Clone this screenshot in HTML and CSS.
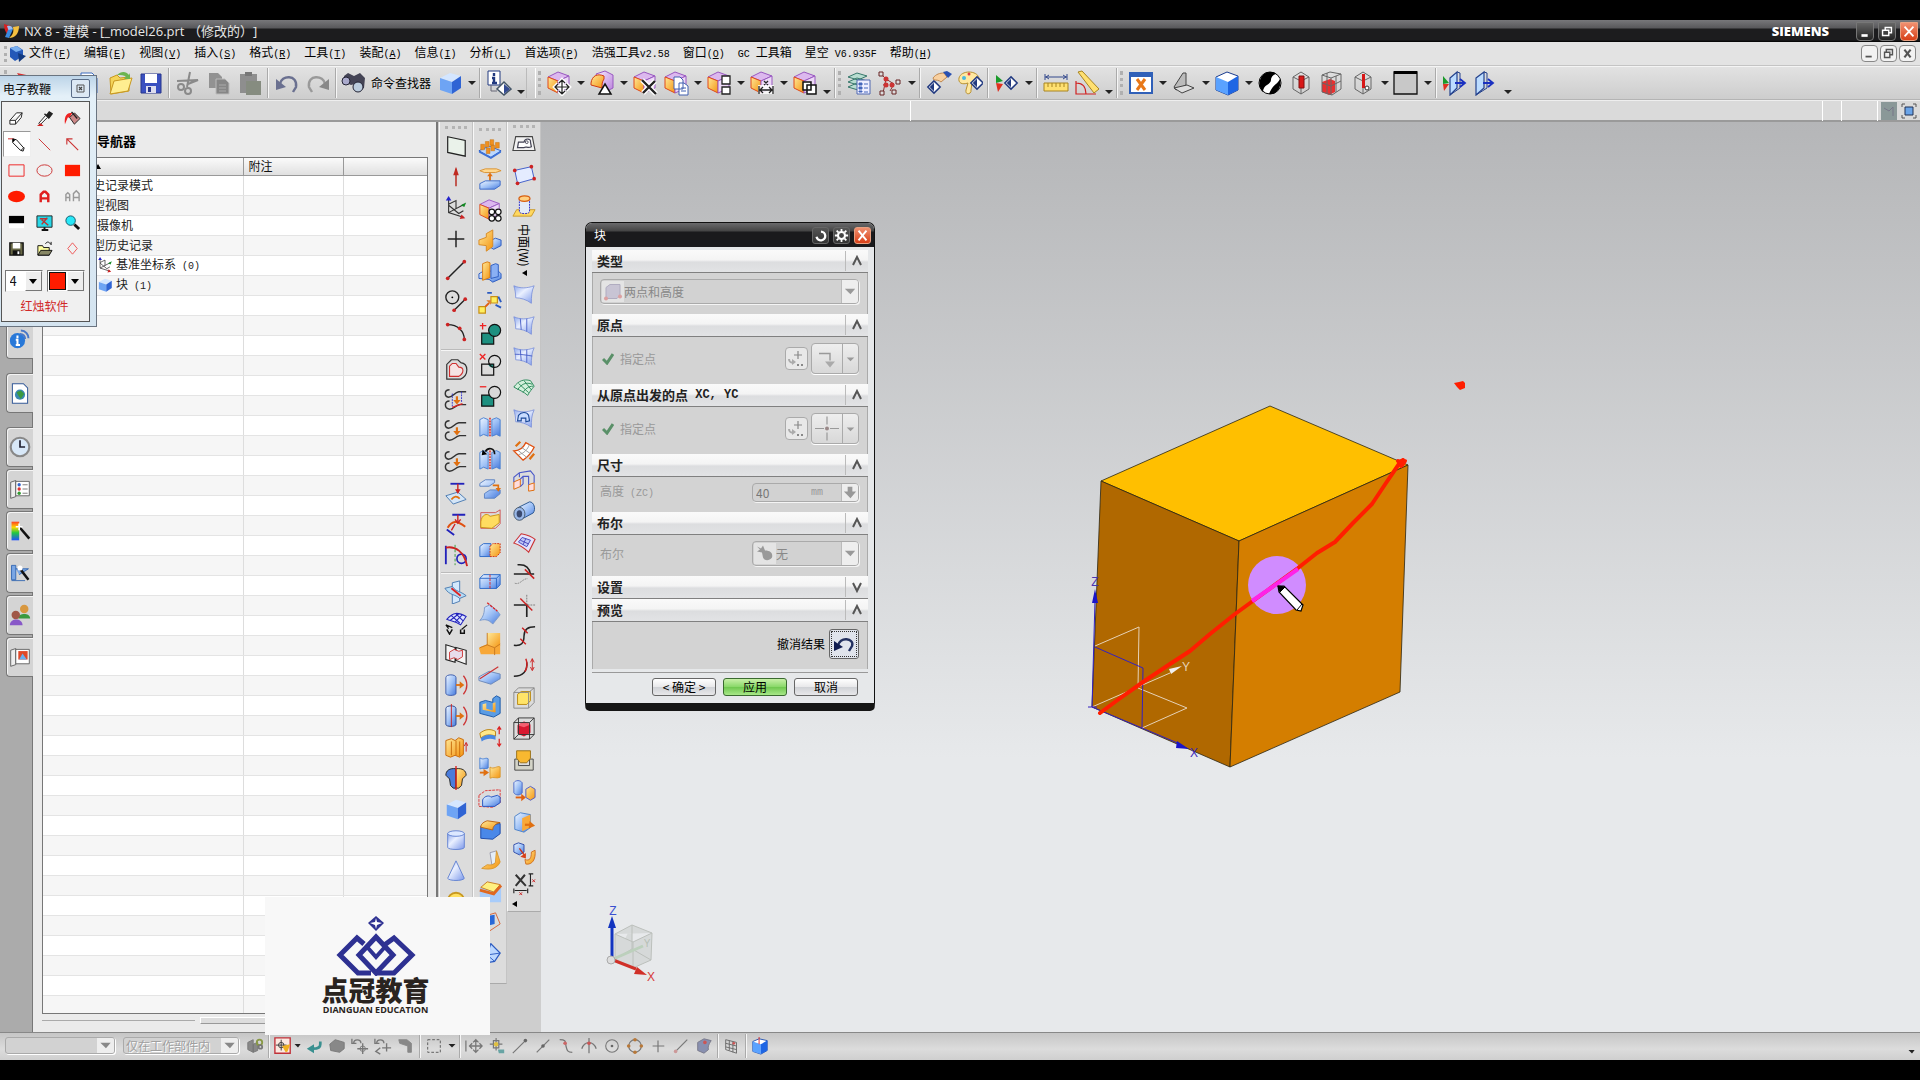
FILE: index.html
```html
<!DOCTYPE html>
<html lang="zh-CN">
<head>
<meta charset="utf-8">
<title>NX 8 - 建模</title>
<link rel="stylesheet" href="styles.css">
</head>
<body>
<svg class="defs" width="0" height="0" aria-hidden="true">
<defs>
<linearGradient id="gb" x1="0" y1="0" x2="1" y2="1"><stop offset="0" stop-color="#eef5ff"/><stop offset=".5" stop-color="#a0c2f6"/><stop offset="1" stop-color="#4679dc"/></linearGradient>
<linearGradient id="go" x1="0" y1="0" x2="1" y2="1"><stop offset="0" stop-color="#ffe898"/><stop offset="1" stop-color="#f49410"/></linearGradient>
<linearGradient id="gp" x1="0" y1="0" x2="1" y2="1"><stop offset="0" stop-color="#f8ecfe"/><stop offset="1" stop-color="#b880dc"/></linearGradient>
<linearGradient id="gs" x1="0" y1="0" x2="1" y2="1"><stop offset="0" stop-color="#8ea8ec"/><stop offset=".4" stop-color="#eaf0ff"/><stop offset="1" stop-color="#7c98ea"/></linearGradient>
<linearGradient id="gr" x1="0" y1="0" x2="0" y2="1"><stop offset="0" stop-color="#ff4020"/><stop offset=".3" stop-color="#ffd800"/><stop offset=".6" stop-color="#20c840"/><stop offset="1" stop-color="#2050ff"/></linearGradient>
<symbol id="cube" viewBox="0 0 26 26"><path d="M3 8l10-5 11 3-9 6z" fill="#d4e6ff"/><path d="M3 8l12 4v12L3 20z" fill="#6ea4f4"/><path d="M15 12l9-6v12l-9 6z" fill="#2f64d4"/></symbol>
<symbol id="ocube" viewBox="0 0 26 26"><path d="M2 7l10-5 11 4-11 5z" fill="#dcb8ee" stroke="#9858c0"/><path d="M2 7l10 4v12L2 18z" fill="url(#go)" stroke="#e04818"/><path d="M12 11l11-5v12l-11 5z" fill="#ecd8f6" stroke="#9858c0"/></symbol>
<symbol id="wire" viewBox="0 0 26 26"><path d="M5 7l8-5 8 5v12l-8 5-8-5zM5 7l8 4 8-4M13 11v13" fill="none" stroke="#666"/></symbol>
<symbol id="dia" viewBox="0 0 26 26"><path d="M13 3l10 10-10 10L3 13z" fill="#fff" stroke="#223a80" stroke-width="2.5"/><path d="M13 6v14l-7-7z" fill="#223a80"/></symbol>
<symbol id="scurve" viewBox="0 0 26 26"><path d="M6 2C0 2 0 9 5 10c5 0 6-5 11-6h8M6 14c-6 0-6 8 0 9 5 0 6-4 11-5h7" fill="none" stroke="#333" stroke-width="1.6"/><path d="M14 9v5" stroke="#e07010" stroke-width="2.4"/><path d="M10 13h8l-4 5z" fill="#e07010"/></symbol>
<symbol id="csys" viewBox="0 0 26 26"><path d="M5 2v16l16 5M5 18L22 9M5 9l8-4v9M5 10l11 9 5-3" fill="none" stroke="#333" stroke-width="1.2"/><path d="M2 5l3-5 3 5z" fill="#22c"/><path d="M18 10l6-3-2 5z" fill="#182"/><path d="M17 25l6-1-4-4z" fill="#c22"/></symbol>
<symbol id="sheet" viewBox="0 0 26 26"><path d="M2 3c7 3 14 3 22 0-3 6-3 12-3 19C16 18 9 16 4 16 4 10 3 7 2 3z" fill="url(#gs)" stroke="#7088d8" stroke-width=".8"/></symbol>
</defs>
</svg>

<div class="app">
<header class="titlebar">
  <svg class="i16" viewBox="0 0 16 16"><path d="M1 1l7 2-3 9C2 9 1 5 1 1z" fill="#d82020"/><path d="M4 3c3-1 5 0 6 3l-4 3z" fill="#9be"/><path d="M10 4l6-1c0 8-4 12-10 12 4-3 5-6 4-11z" fill="#f4c040"/><path d="M5 7l5-1-4 9-4-1z" fill="#3c8ce0"/></svg>
  <span class="apptitle">NX 8 - 建模 - [_model26.prt （修改的）]</span>
  <span class="brand">SIEMENS</span>
  <div class="winbtns">
    <button aria-label="最小化"><svg viewBox="0 0 18 19"><path d="M5 14h7" stroke="#fff" stroke-width="3"/></svg></button>
    <button aria-label="还原"><svg viewBox="0 0 18 19"><path d="M7 8V5h7v6h-3M4 8h7v6H4z" fill="none" stroke="#fff" stroke-width="1.6"/></svg></button>
    <button class="close" aria-label="关闭"><svg viewBox="0 0 18 19"><path d="M4 4l10 11M14 4L4 15" stroke="#fff" stroke-width="2"/></svg></button>
  </div>
</header>

<nav class="menubar">
  <i class="grip"></i>
  <svg class="i18" viewBox="0 0 18 18"><path d="M2 3l7-2 6 4v6l-8 5-5-4z" fill="#2458b8"/><path d="M2 3l7-2 5 4-6 2z" fill="#7ab0f0"/><path d="M10 8l8 3-7 6z" fill="#123a80"/></svg>
  <a href="#">文件<span class="la">(<u>F</u>)</span></a>
  <a href="#">编辑<span class="la">(<u>E</u>)</span></a>
  <a href="#">视图<span class="la">(<u>V</u>)</span></a>
  <a href="#">插入<span class="la">(<u>S</u>)</span></a>
  <a href="#">格式<span class="la">(<u>R</u>)</span></a>
  <a href="#">工具<span class="la">(<u>T</u>)</span></a>
  <a href="#">装配<span class="la">(<u>A</u>)</span></a>
  <a href="#">信息<span class="la">(<u>I</u>)</span></a>
  <a href="#">分析<span class="la">(<u>L</u>)</span></a>
  <a href="#">首选项<span class="la">(<u>P</u>)</span></a>
  <a href="#">浩强工具<span class="la">v2.58</span></a>
  <a href="#">窗口<span class="la">(<u>O</u>)</span></a>
  <a href="#"><span class="la">GC </span>工具箱</a>
  <a href="#">星空<span class="la"> V6.935F</span></a>
  <a href="#">帮助<span class="la">(<u>H</u>)</span></a>
  <div class="docbtns">
    <button aria-label="最小化"><svg viewBox="0 0 17 17"><path d="M4 12h7" stroke="#555" stroke-width="2"/></svg></button>
    <button aria-label="还原"><svg viewBox="0 0 17 17"><path d="M6 7V4h7v6h-3M4 7h6v6H4z" fill="none" stroke="#555" stroke-width="1.6"/></svg></button>
    <button aria-label="关闭"><svg viewBox="0 0 17 17"><path d="M5 4l7 9M12 4l-7 9" stroke="#555" stroke-width="2.4"/></svg></button>
  </div>
</nav>

<div class="toolbar">
  <div class="startgroup"><i class="grip"></i><svg viewBox="0 0 26 26"><path d="M4 3l14 3-6 10z" fill="#d83030"/></svg></div>
  <button><svg viewBox="0 0 26 26"><path d="M5 3h11l5 5v15H5z" fill="#fff" stroke="#3c6cc0"/></svg></button>
  <button><svg viewBox="0 0 26 26"><path d="M3 8l7-3 3 3 9-1v14L4 24z" fill="#f4d458" stroke="#c89820"/><path d="M3 24l4-13 18-3-4 13z" fill="#ffee90" stroke="#c89820"/><path d="M10 5c4-4 9-4 12 0l1-2v6h-6l2-2c-2-2-5-2-9-2z" fill="#6cb450"/></svg></button>
  <button><svg viewBox="0 0 26 26"><path d="M3 4h20v19H3z" fill="#3a50c0" stroke="#26348c"/><path d="M7 4h12v9H7z" fill="#fff"/><path d="M8 16h10v7H8z" fill="#dde"/><path d="M10 17h3v5h-3z" fill="#26348c"/></svg></button>
  <i class="sep"></i>
  <button><svg viewBox="0 0 26 26"><path d="M15 2l-3 15M2 11l21-1-10 4" fill="none" stroke="#8a8a8a" stroke-width="2"/><circle cx="6" cy="17" r="3" fill="none" stroke="#8a8a8a" stroke-width="2"/><circle cx="13" cy="21" r="3" fill="none" stroke="#8a8a8a" stroke-width="2"/></svg></button>
  <button><svg viewBox="0 0 26 26"><path d="M3 3h9l4 4v11H3z" fill="#929292"/><path d="M10 9h9l4 4v11H10z" fill="#868686" stroke="#bbb"/><path d="M13 15h7M13 18h7M13 21h7" stroke="#aaa"/></svg></button>
  <button><svg viewBox="0 0 26 26"><path d="M3 4h17v19H3z" fill="#8e8e8e"/><path d="M8 2h7v4H8z" fill="#777"/><path d="M9 11h15v14H9z" fill="#868c80"/></svg></button>
  <i class="sep"></i>
  <button><svg viewBox="0 0 26 26"><path d="M6 14c1-9 18-10 16 3l-3 5" fill="none" stroke="#6a7090" stroke-width="2.4"/><path d="M2 9v11l10-3z" fill="#6a7090"/></svg></button>
  <button><svg viewBox="0 0 26 26"><path d="M20 14C19 5 2 4 4 17l3 5" fill="none" stroke="#999" stroke-width="2.4"/><path d="M24 9v11l-10-3z" fill="#888"/></svg></button>
  <i class="sep"></i>
  <button class="wide"><svg viewBox="0 0 26 26"><path d="M3 6l4-3 6 3 6-3 5 5-1 10-6 3-3-7-4 1-7-3z" fill="#445"/><circle cx="5" cy="11" r="4" fill="#aac" stroke="#223"/><circle cx="17" cy="17" r="5" fill="#bcd" stroke="#223"/></svg><span>命令查找器</span></button>
  <button><svg><use href="#cube"/></svg></button><i class="car"></i>
  <i class="sep"></i>
  <button><svg viewBox="0 0 26 26"><path d="M2 1h12v14H2z" fill="#fff" stroke="#223a80"/><path d="M8 3v3M6 8h2v5M6 13h5" stroke="#223a80" stroke-width="2.4" fill="none"/><path d="M18 12l7 7-7 6-7-6z" fill="#fff" stroke="#456" stroke-width="1.5"/><path d="M18 14v10l6-5z" fill="#334a90"/><path d="M5 15v6h6" fill="none" stroke="#667"/></svg></button><i class="car low"></i>
  <i class="gap"></i><i class="grip"></i>
  <button><svg viewBox="0 0 26 26"><use href="#ocube"/><path d="M16 10v14M9 17h14M13 13l3-3 3 3M13 21l3 3 3-3M12 14l-3 3 3 3M20 14l3 3-3 3" fill="none" stroke="#fff" stroke-width="4"/><path d="M16 10v14M9 17h14M13 13l3-3 3 3M13 21l3 3 3-3M12 14l-3 3 3 3M20 14l3 3-3 3" fill="none" stroke="#222" stroke-width="1.2"/></svg></button><i class="car"></i>
  <button><svg viewBox="0 0 26 26"><path d="M7 4l9-3 8 4v13l-8 4z" fill="url(#gp)" stroke="#9858c0"/><path d="M2 13C3 6 8 3 15 6v3c-2 3-2 5-2 9l-11-3z" fill="url(#go)" stroke="#d03a10"/><path d="M16 14l6 10H10z" fill="#fff" stroke="#111" stroke-width="1.5"/></svg></button><i class="car"></i>
  <button><svg viewBox="0 0 26 26"><use href="#ocube"/><path d="M10 10l14 14M23 11L11 23" stroke="#fff" stroke-width="5"/><path d="M10 10l14 14M23 11L11 23" stroke="#222" stroke-width="2.4"/></svg></button>
  <button><svg viewBox="0 0 26 26"><use href="#ocube"/><path d="M11 7h6l3 3v9h-9zM16 13h5l4 3v9h-9z" fill="#fff" stroke="#4060b0"/><path d="M18 18h5M18 21h5" stroke="#4060b0"/></svg></button><i class="car"></i>
  <button><svg viewBox="0 0 26 26"><use href="#ocube"/><path d="M16 6h8v8h-8zM16 17h8v7h-8z" fill="#fff" stroke="#222" stroke-width="1.3"/></svg></button><i class="car"></i>
  <button><svg viewBox="0 0 26 26"><use href="#ocube"/><path d="M9 15h16v9H9z" fill="#fff" opacity=".8"/><path d="M10 16v8M24 16v8M11 20h12M14 17l-3 3 3 3M20 17l3 3-3 3M15 11l4 4M19 11l-4 4" fill="none" stroke="#222" stroke-width="1.3"/></svg></button><i class="car"></i>
  <button><svg viewBox="0 0 26 26"><use href="#ocube"/><path d="M11 12h8v8h-8zM15 15h9v9h-9z" fill="#fff" stroke="#111" stroke-width="1.5"/></svg></button><i class="car low"></i>
  <i class="sep"></i><i class="grip"></i>
  <button><svg viewBox="0 0 26 26"><path d="M2 7l9-4 10 3-9 4zM2 12l9-4 10 3-9 4zM2 17l9-4 10 3-9 4z" fill="#b8ddd0" stroke="#38786c"/><path d="M11 10h13v14H11z" fill="#eef" stroke="#5068b0"/><path d="M13 13h3v2h-3zM13 17h3v2h-3zM13 21h3v1h-3zM18 14h4M18 18h4M18 22h4" fill="#4466bb" stroke="#4466bb"/></svg></button>
  <button><svg viewBox="0 0 26 26"><path d="M4 4l5 5-3 14M9 9l8 5M17 14l-4 7M6 15l5-1" fill="none" stroke="#833"/><path d="M2 2h4v4H2zM3 21h4v4H3zM19 10h4v4h-4zM15 20h4v4h-4z" fill="#ddd" stroke="#622"/><circle cx="9" cy="9" r="2.500" fill="#c33"/><circle cx="9" cy="15" r="2.500" fill="#c33"/><circle cx="15" cy="15" r="2.500" fill="#c33"/></svg></button><i class="car"></i>
  <i class="sep"></i>
  <button><svg viewBox="0 0 26 26"><svg x="0" y="9" width="16" height="16"><use href="#dia"/></svg><path d="M7 8c3-4 7-5 11-5l3 4-6 5c-2-2-5-2-7-2z" fill="#f8d0a0" stroke="#c08850"/><path d="M17 2l4-1 5 3-4 4z" fill="#2a50b0"/></svg></button>
  <button><svg viewBox="0 0 26 26"><path d="M2 8C4 0 20 0 22 8c0 5-5 5-7 4l-1 8c1 4-6 6-5 0l2-7C5 15 1 13 2 8z" fill="#ffe8a0" stroke="#b89030"/><circle cx="7" cy="8" r="2" fill="#48b8e0"/><circle cx="12" cy="4" r="1.500" fill="#e04040"/><svg x="12" y="5" width="14" height="14"><use href="#dia"/></svg></svg></button>
  <i class="sep"></i>
  <button><svg viewBox="0 0 26 26"><path d="M2 5l7 6-7 2z" fill="#1a9a2a"/><path d="M2 13l7 1-5 8z" fill="#e03020"/><svg x="9" y="5" width="16" height="16"><use href="#dia"/></svg></svg></button><i class="car"></i>
  <i class="sep"></i>
  <button><svg viewBox="0 0 26 26"><path d="M2 7h22M2 4v6M24 4v6M6 5L3 7l3 2M20 5l3 2-3 2" fill="none" stroke="#33488c"/><path d="M1 13h24v8H1z" fill="#ffe070" stroke="#a88420"/><path d="M5 13v4M9 13v4M13 13v4M17 13v4M21 13v4" stroke="#a88420"/></svg></button>
  <button><svg viewBox="0 0 26 26"><path d="M4 2l4-1 17 18-5 4z" fill="#ffe070" stroke="#a88420"/><path d="M2 11v13h20M2 13c8 0 10 5 10 11" fill="none" stroke="#d02020" stroke-width="1.2"/></svg></button><i class="car low"></i>
  <i class="sep"></i><i class="grip"></i>
  <button><svg viewBox="0 0 26 26"><path d="M2 3h22v20H2z" fill="#fff" stroke="#3060b8" stroke-width="2"/><path d="M2 3h22v4H2z" fill="#3060b8"/><path d="M9 9l8 11M17 9L9 20" stroke="#e87818" stroke-width="3"/></svg></button><i class="car"></i>
  <button><svg viewBox="0 0 26 26"><path d="M3 17L12 3h3v12l-10 5z" fill="#bbb" stroke="#444"/><path d="M3 18l13-3 7 3-12 5z" fill="#ddd" stroke="#444"/></svg></button><i class="car"></i>
  <button><svg viewBox="0 0 26 26"><path d="M2 7l11-5 11 4v14l-10 5-12-5z" fill="#fff" stroke="#1a3c90"/><path d="M2 7l12 5v13L2 20z" fill="#5aa2ff"/><path d="M14 12l10-6v14l-10 5z" fill="#1e66e4"/></svg></button><i class="car"></i>
  <button><svg viewBox="0 0 26 26"><circle cx="13" cy="13" r="11" fill="#fff" stroke="#000"/><path d="M13 2C3 2-1 16 6 22c0-8 8-7 8-12 0-4 4-6 5-6-2-2-4-2-6-2zM23 9c-3 6-7 5-11 15 6 1 13-5 11-15z" fill="#000"/></svg></button>
  <button><svg viewBox="0 0 26 26"><use href="#wire"/><path d="M11 6h5v12h-5z" fill="#d81818" stroke="#801010"/></svg></button>
  <button><svg viewBox="0 0 26 26"><path d="M3 12l8-3 5 2v11l-6 3-7-3z" fill="#e83030"/><path d="M3 5l8-3 11 2v15l-9 6-10-3zM3 5l9 3 10-4M12 8v17M3 13l9 3 10-5M8 3v20M17 6v16" fill="none" stroke="#666"/></svg></button>
  <button><svg viewBox="0 0 26 26"><use href="#wire"/><path d="M12 4h3v14h-3z" fill="#d81818"/><circle cx="17" cy="18" r="2" fill="#fff" stroke="#333"/></svg></button><i class="car"></i>
  <button><svg viewBox="0 0 26 26"><path d="M1 2h23v22H1z" fill="#c8c8c8" stroke="#111" stroke-width="1.3"/><path d="M1 1h23v3H1z" fill="#000"/></svg></button><i class="car"></i>
  <i class="sep"></i>
  <button><svg viewBox="0 0 26 26"><path d="M1 6l6 7-6 1z" fill="#1a9a2a"/><path d="M1 14l6 0-5 7z" fill="#e03020"/><path d="M8 8l7-6v16l-7 7z" fill="#bcdcff" stroke="#24418c" stroke-width="1.2"/><path d="M15 2l3 1v15l-10 7" fill="none" stroke="#24418c"/><path d="M13 13h9m-4-4l5 4-5 4" stroke="#1a30c0" stroke-width="1.8" fill="none"/></svg></button>
  <button><svg viewBox="0 0 26 26"><path d="M3 8l8-6v16l-8 7z" fill="#bcdcff" stroke="#24418c" stroke-width="1.2"/><path d="M11 2l3 1v15l-11 7" fill="none" stroke="#24418c"/><path d="M10 13h9m-4-4l5 4-5 4" stroke="#1a30c0" stroke-width="1.8" fill="none"/></svg></button><i class="car low"></i>
</div>

<div class="cuebar"><span class="cue"></span><span class="status"></span><span class="c1"></span><span class="c2"></span>
  <svg class="shade" viewBox="0 0 18 18"><path d="M1 0h16v18H1z" fill="#8a9898"/><path d="M4 6l5 3 4-4v9" fill="none" stroke="#778"/></svg>
  <svg viewBox="0 0 18 18"><path d="M2 5V2h3M13 2h3v3M16 13v3h-3M5 16H2v-3" fill="none" stroke="#555"/><path d="M5 5h8v8H5z" fill="#6aa4e8" stroke="#235" /></svg>
</div>

<main class="main">
<aside class="rbar">
  <button><svg viewBox="0 0 26 26"><circle cx="10" cy="15" r="9" fill="#2878d8"/><path d="M10 9v3M8 14h2v6M8 20h5" stroke="#fff" stroke-width="2.4" fill="none"/><path d="M13 7c4 0 6 3 6 6M14 3c6 0 9 5 9 9" fill="none" stroke="#4a78c8" stroke-width="2.4"/></svg></button>
  <button class="spaced"><svg viewBox="0 0 26 26"><path d="M4 2h13l5 5v18H4z" fill="#fff" stroke="#345a98" stroke-width="1.2"/><circle cx="13" cy="15" r="6" fill="#3a88b0"/><path d="M9 12l5-2 4 4-4 6-3-4z" fill="#3a9a40"/></svg></button>
  <button class="spaced"><svg viewBox="0 0 26 26"><circle cx="13" cy="13" r="11" fill="#d8e8f8" stroke="#888" stroke-width="2.5"/><path d="M13 5v8h6" fill="none" stroke="#223" stroke-width="2"/></svg></button>
  <button><svg viewBox="0 0 26 26"><path d="M2 5l6-2v19l-6 2z" fill="#eee" stroke="#555"/><path d="M8 4h16v17H8z" fill="#fff" stroke="#555"/><circle cx="12" cy="8" r="2" fill="#36c"/><circle cx="12" cy="13" r="2" fill="#d33"/><circle cx="12" cy="18" r="2" fill="#393"/><path d="M16 8h6M16 13h6M16 18h6" stroke="#666"/></svg></button>
  <button><svg viewBox="0 0 26 26"><path d="M3 2h9v22H3z" fill="url(#gr)"/><path d="M12 8l12 14" stroke="#111" stroke-width="3"/><path d="M12 4v8M8 8h8" stroke="#fff" stroke-width="2"/></svg></button>
  <button><svg viewBox="0 0 26 26"><path d="M3 4h5v17H3zM8 8l15 0-11 7M3 22h16" fill="#7aa6e4" stroke="#2a60b0"/><path d="M13 8l10 13" stroke="#111" stroke-width="3"/><circle cx="13" cy="7" r="3" fill="#fff"/></svg></button>
  <button><svg viewBox="0 0 26 26"><circle cx="18" cy="6" r="5" fill="#d89840"/><path d="M11 17c0-7 14-7 14 0z" fill="#3a9a40"/><circle cx="8" cy="13" r="5" fill="#a05848"/><path d="M1 25c0-9 15-9 15 0z" fill="#8858c8"/></svg></button>
  <button><svg viewBox="0 0 26 26"><path d="M2 5l6-2v19l-6 2z" fill="#eee" stroke="#555"/><path d="M8 4h16v17H8z" fill="#fff" stroke="#555"/><path d="M11 6h11v10H11z" fill="#e04828"/><path d="M12 16l4-7 5 7z" fill="#68b0f0"/></svg></button>
</aside>

<section class="navpanel">
  <h2>部件导航器</h2>
  <div class="tree">
  <table>
    <colgroup><col class="k1"><col class="k2"><col></colgroup>
    <thead><tr><th class="sorted"><svg viewBox="0 0 6 5"><path d="M3 0l3 5H0z"/></svg></th><th>附注</th><th></th></tr></thead>
    <tbody>
    <tr><td class="t1">历史记录模式</td><td></td><td></td></tr>
    <tr><td class="t1">模型视图</td><td></td><td></td></tr>
    <tr><td class="t2">摄像机</td><td></td><td></td></tr>
    <tr><td class="t1">模型历史记录</td><td></td><td></td></tr>
    <tr><td class="t2"><svg class="i16"><use href="#csys"/></svg>基准坐标系<span class="la"> (0)</span></td><td></td><td></td></tr>
    <tr><td class="t2"><svg class="i16"><use href="#cube"/></svg>块<span class="la"> (1)</span></td><td></td><td></td></tr>
    <tr><td></td><td></td><td></td></tr><tr><td></td><td></td><td></td></tr><tr><td></td><td></td><td></td></tr><tr><td></td><td></td><td></td></tr>
    <tr><td></td><td></td><td></td></tr><tr><td></td><td></td><td></td></tr><tr><td></td><td></td><td></td></tr><tr><td></td><td></td><td></td></tr>
    <tr><td></td><td></td><td></td></tr><tr><td></td><td></td><td></td></tr><tr><td></td><td></td><td></td></tr><tr><td></td><td></td><td></td></tr>
    <tr><td></td><td></td><td></td></tr><tr><td></td><td></td><td></td></tr><tr><td></td><td></td><td></td></tr><tr><td></td><td></td><td></td></tr>
    <tr><td></td><td></td><td></td></tr><tr><td></td><td></td><td></td></tr><tr><td></td><td></td><td></td></tr><tr><td></td><td></td><td></td></tr>
    <tr><td></td><td></td><td></td></tr><tr><td></td><td></td><td></td></tr><tr><td></td><td></td><td></td></tr><tr><td></td><td></td><td></td></tr>
    <tr><td></td><td></td><td></td></tr><tr><td></td><td></td><td></td></tr><tr><td></td><td></td><td></td></tr><tr><td></td><td></td><td></td></tr>
    <tr><td></td><td></td><td></td></tr><tr><td></td><td></td><td></td></tr><tr><td></td><td></td><td></td></tr><tr><td></td><td></td><td></td></tr>
    <tr><td></td><td></td><td></td></tr><tr><td></td><td></td><td></td></tr><tr><td></td><td></td><td></td></tr><tr><td></td><td></td><td></td></tr>
    </tbody>
  </table>
  </div>
  <div class="hscroll"><i></i><b></b></div>
</section>

<div class="vbars">
<div class="vbar">
  <i class="vgrip"></i>
  <button><svg viewBox="0 0 26 26"><path d="M4 3l19 4v17L4 20z" fill="#eaf2ea" stroke="#222" stroke-width="1.3"/></svg></button>
  <button><svg viewBox="0 0 26 26"><path d="M13 23V4" stroke="#b82a20" stroke-width="1.6"/><path d="M10 11l3-9 3 9z" fill="#c02a20"/></svg></button>
  <button><svg><use href="#csys"/></svg></button>
  <button><svg viewBox="0 0 26 26"><path d="M13 4v18M4 13h18" stroke="#222" stroke-width="1.6"/></svg></button>
  <button><svg viewBox="0 0 26 26"><path d="M4 22L22 4" stroke="#222" stroke-width="1.6"/><circle cx="4" cy="22" r="2" fill="#c22"/><circle cx="22" cy="4" r="2" fill="#c22"/></svg></button>
  <button><svg viewBox="0 0 26 26"><circle cx="9" cy="9" r="7" fill="none" stroke="#222" stroke-width="1.5"/><path d="M11 23l12-12" stroke="#222" stroke-width="1.5"/><circle cx="9" cy="9" r="1"/><circle cx="11" cy="23" r="2" fill="#c22"/><circle cx="23" cy="11" r="2" fill="#c22"/></svg></button>
  <button><svg viewBox="0 0 26 26"><path d="M4 5c11 0 18 7 18 16" fill="none" stroke="#222" stroke-width="1.5"/><circle cx="4" cy="5" r="2" fill="#c22"/><circle cx="17" cy="9" r="2" fill="#c22"/><circle cx="22" cy="21" r="2" fill="#c22"/></svg></button>
  <i class="vsep"></i>
  <button><svg viewBox="0 0 26 26"><path d="M3 24V8l5-5h7l3 3c9 1 9 14 0 18z" fill="none" stroke="#333" stroke-width="1.3"/><path d="M6 21V10l3-3h4l3 4c6 0 6 6 0 10z" fill="#f6e4e4" stroke="#d03030" stroke-width="1.2"/></svg></button>
  <button><svg viewBox="0 0 26 26"><use href="#scurve"/><path d="M9 6v14M19 4v12" stroke="#33c" stroke-dasharray="2 1"/><path d="M9 21l11-4" stroke="#d22" stroke-width="1.5"/></svg></button>
  <button><svg><use href="#scurve"/></svg></button>
  <button><svg><use href="#scurve"/></svg></button>
  <button><svg viewBox="0 0 26 26"><path d="M2 16l13-4 9 8-14 5z" fill="#d4e6f8" stroke="#4878b0"/><path d="M7 3h15" stroke="#22b" stroke-width="2"/><path d="M15 3v9" stroke="#c22" stroke-width="1.5"/><path d="M12 9l3 5 3-5z" fill="#c22"/><path d="M8 20c3-4 6-4 9-1" fill="none" stroke="#e07010" stroke-width="2"/></svg></button>
  <button><svg viewBox="0 0 26 26"><path d="M9 3h14M3 19l8 6" stroke="#22b" stroke-width="2"/><path d="M4 17c5-8 10-8 19-1" fill="none" stroke="#e05010" stroke-width="2.2"/><path d="M15 3v7M8 20l4-7M12 8l3 4 3-4" fill="none" stroke="#c22" stroke-width="1.5"/></svg></button>
  <button><svg viewBox="0 0 26 26"><path d="M2 3v20" stroke="#22b" stroke-width="2"/><circle cx="19" cy="17" r="5" fill="none" stroke="#22b" stroke-width="1.8"/><path d="M2 5c10-2 20 4 23 20" fill="none" stroke="#c22" stroke-width="2"/><path d="M12 2v22" stroke="#393" stroke-dasharray="3 2"/></svg></button>
  <i class="vsep"></i>
  <button><svg viewBox="0 0 26 26"><path d="M9 3l8-2v22l-8 3z" fill="#d4e8fc" stroke="#4878b0"/><path d="M1 9l8-2c4 6 9 5 15 10l-7 3C12 15 6 17 1 9z" fill="#b8dcf4" stroke="#4878b0"/><path d="M8 9l10 8" stroke="#d22" stroke-width="2"/></svg></button>
  <button><svg viewBox="0 0 26 26"><path d="M3 9c7-8 12-8 21-3l-6 9C12 11 8 11 3 9zM8 5l9 8M13 3l8 8M7 10l9-7M12 12l8-8" fill="#dde4ff" stroke="#22b" stroke-width="1.1"/><path d="M2 15l7 3M2 15l3 4M25 15l-6 5" stroke="#111" stroke-width="1.3"/><path d="M3 20l3 5 3-5M18 20v4h4v-4" fill="none" stroke="#111" stroke-width="1.6"/></svg></button>
  <button><svg viewBox="0 0 26 26"><path d="M2 3l10 3v16L2 19zM13 6l11 3v15l-11-4z" fill="#f4f4f4" stroke="#222" stroke-width="1.2"/><path d="M6 11l5-3 5 2 4-1v7l-5 3-4-2-5 2z" fill="#e8dcec" stroke="#c33"/></svg></button>
  <button><svg viewBox="0 0 26 26"><path d="M2 5c0-4 11-4 11 0v17c0 3-11 3-11 0z" fill="url(#gb)" stroke="#3858a8"/><path d="M13 13h5" stroke="#e07010" stroke-width="2"/><path d="M17 9l5 4-5 4z" fill="#e07010"/><path d="M21 3c5 6 5 14 0 20" fill="none" stroke="#c33" stroke-width="1.4"/></svg></button>
  <button><svg viewBox="0 0 26 26"><path d="M2 5c0-4 11-4 11 0v17c0 3-11 3-11 0z" fill="url(#gb)" stroke="#24418c"/><path d="M8 0v25" stroke="#c22"/><path d="M13 13h5" stroke="#e07010" stroke-width="2"/><path d="M17 9l5 4-5 4z" fill="#e07010"/><path d="M21 3c5 6 5 14 0 20" fill="none" stroke="#c33" stroke-width="1.4"/></svg></button>
  <button><svg viewBox="0 0 26 26"><path d="M2 6l6-2 4 2 4-3 5 2v16l-4 3-5-2-5 2-5-2z" fill="url(#go)" stroke="#c86808"/><path d="M8 7v15M13 6v16M17 7v16" stroke="#c86808"/><path d="M24 18V9m-2 3l2-4 2 4" stroke="#c22" fill="none"/></svg></button>
  <button><svg viewBox="0 0 26 26"><path d="M13 3C6 2 2 5 2 10l4 4 1 7 3 3h3z" fill="#4a7cdc" stroke="#222"/><path d="M13 3c7-1 11 2 11 7l-4 4-1 7-3 3h-3z" fill="url(#go)" stroke="#222"/><path d="M13 0v26" stroke="#d22" stroke-width="1.5"/></svg></button>
  <button><svg><use href="#cube"/></svg></button>
  <button><svg viewBox="0 0 26 26"><path d="M4 6v15c0 3 18 3 18 0V6z" fill="url(#gs)" stroke="#6080d0"/><ellipse cx="13" cy="6" rx="9" ry="3" fill="#dce8ff" stroke="#6080d0"/></svg></button>
  <button><svg viewBox="0 0 26 26"><path d="M13 2L4 21c2 3 16 3 18 0z" fill="url(#gs)" stroke="#6080d0"/></svg></button>
  <button><svg viewBox="0 0 26 26"><circle cx="13" cy="12" r="9" fill="#ffe060" stroke="#c89820" stroke-width="2"/></svg></button>
</div>
<div class="vbar two">
  <i class="vgrip"></i>
  <button><svg viewBox="0 0 26 26"><path d="M1 16l11-5 13 5-11 7z" fill="#bcd8ff" stroke="#2a5ac0"/><path d="M1 16l13 7 11-7v2l-11 7-13-7z" fill="#3a70d8"/><path d="M3 9h4v6H3zM8 6h4v6H8zM13 4h4v6h-4zM9 13h4v6H9zM14 10h4v6h-4zM19 7h4v6h-4z" fill="#f09020" stroke="#c87818" stroke-width=".6"/></svg></button>
  <button><svg viewBox="0 0 26 26"><path d="M2 4l6-2h12l5 2-6 2H7z" fill="#ffd890" stroke="#d89030"/><path d="M13 15V9" stroke="#e07010" stroke-width="2"/><path d="M10 10l3-4 3 4z" fill="#e07010"/><path d="M2 18l6-3h16v5l-6 4H2z" fill="url(#gb)" stroke="#3a68c8"/></svg></button>
  <button><svg viewBox="0 0 26 26"><use href="#ocube"/><g fill="#fff" stroke="#111" stroke-width="1.3"><circle cx="15" cy="15" r="3"/><circle cx="22" cy="15" r="3"/><circle cx="15" cy="22" r="3"/><circle cx="22" cy="22" r="3"/></g></svg></button>
  <button><svg viewBox="0 0 26 26"><path d="M12 13l7-3 6 2v6l-8 4-5-3z" fill="url(#gb)" stroke="#2a5ac0"/><path d="M1 12l8-3V5l7-4v18l-7 5v-6l-8-1z" fill="url(#go)" stroke="#d88820"/></svg></button>
  <button><svg viewBox="0 0 26 26"><path d="M1 15l5-3h16l3 3v5l-9 4-4-3-11-1z" fill="url(#gb)" stroke="#2a5ac0"/><path d="M5 4l5-2 3 1v16l-8 3z" fill="url(#go)" stroke="#d87810"/><path d="M14 6l5-2 3 1v13l-8 2z" fill="#8ab0f4" stroke="#2a5ac0"/></svg></button>
  <button><svg viewBox="0 0 26 26"><path d="M1 17h7v7H1zM14 6h7v7h-7z" fill="#fff060" stroke="#c89018" stroke-width="1.3"/><path d="M8 17l4-4" stroke="#e06010" stroke-width="2"/><path d="M9 10h5v5z" fill="#e08030"/><path d="M10 2l5 0M19 15l6 3M22 6l3 6" stroke="#2a5ac0" stroke-width="2"/></svg></button>
  <button><svg viewBox="0 0 26 26"><path d="M4 12h13v12H4z" fill="#1d9080" stroke="#111" stroke-width="1.3"/><circle cx="18" cy="9" r="6.500" fill="#1d9080" stroke="#111" stroke-width="1.3"/><path d="M2 4h7M5 1v7" stroke="#e22" stroke-width="1.4"/></svg></button>
  <button><svg viewBox="0 0 26 26"><path d="M11 12h6v4c-3 0-5-1-6-4z" fill="#1d9080"/><path d="M4 12h13v12H4z" fill="none" stroke="#111" stroke-width="1.3"/><circle cx="18" cy="9" r="6.500" fill="none" stroke="#111" stroke-width="1.3"/><path d="M2 1l6 6M8 1L2 7" stroke="#e22" stroke-width="1.4"/></svg></button>
  <button><svg viewBox="0 0 26 26"><path d="M4 12h13v12H4z" fill="#1d9080" stroke="#111" stroke-width="1.3"/><circle cx="18" cy="9" r="6.500" fill="#d8d8d8" stroke="#111" stroke-width="1.3"/><path d="M2 3h7" stroke="#e22" stroke-width="1.4"/></svg></button>
  <button><svg viewBox="0 0 26 26"><path d="M2 5l4-2 5 2v18l-5-2-4 2zM15 5l5-2 4 2v18l-4-2-5 2z" fill="url(#gb)" stroke="#4a80d0"/><path d="M13 3v21" stroke="#d22" stroke-width="1.6" stroke-dasharray="2 1"/></svg></button>
  <button><svg viewBox="0 0 26 26"><path d="M2 7l4-2 5 2v18l-5-2-4 2zM15 7l5-2 4 2v18l-4-2-5 2z" fill="url(#gb)" stroke="#4a80d0"/><path d="M13 5v20" stroke="#d22" stroke-width="1.6" stroke-dasharray="2 1"/><path d="M8 6c3-5 10-4 10 3" fill="none" stroke="#111" stroke-width="1.8"/><path d="M5 4l5 5-6 1z"/></svg></button>
  <button><svg viewBox="0 0 26 26"><path d="M2 7l6-4h10v3l-6 4H2zM7 18l6-4h11v4l-6 5H7z" fill="url(#gb)" stroke="#5a80c0"/><path d="M16 9h6v4" stroke="#e07010" stroke-width="1.8" fill="none"/><path d="M19 12h6l-3 4z" fill="#e07010"/></svg></button>
  <button><svg viewBox="0 0 26 26"><path d="M3 5h16l5-3v15l-5 5H3z" fill="none" stroke="#c33" stroke-width=".8"/><path d="M3 15c1-8 7-10 10-6l10-2v9l-8 6-12-1z" fill="#ffdc60" stroke="#c89010"/></svg></button>
  <button><svg viewBox="0 0 26 26"><path d="M2 8l4-3h8v14H2z" fill="url(#gb)" stroke="#2a68c8"/><path d="M13 8l3-3h8v10l-4 4h-7z" fill="url(#go)" stroke="#d03010" stroke-dasharray="2 1"/></svg></button>
  <button><svg viewBox="0 0 26 26"><path d="M2 9l4-4h18v11l-4 4H2z" fill="url(#gb)" stroke="#2a68c8"/><path d="M2 9h18l4-4M20 9v11" fill="none" stroke="#2a68c8"/><path d="M13 5v15" stroke="#d22" stroke-dasharray="3 1"/></svg></button>
  <button><svg viewBox="0 0 26 26"><path d="M7 7l6-3 8 7 3 4-8 10C11 19 6 20 2 21c4-4 5-9 5-14z" fill="url(#gb)" stroke="#7a98c8"/><path d="M10 2l11 9" stroke="#d22" stroke-width="1.4" stroke-dasharray="3 1"/></svg></button>
  <button><svg viewBox="0 0 26 26"><path d="M10 1h14v14l-6 3-8-4z" fill="url(#go)"/><path d="M1 17l9-4 8 4 6-3v10H3z" fill="#f8a838"/><path d="M10 1v13l8 3v8M10 14l-8 3M18 17l6-4" fill="none" stroke="#c87820"/></svg></button>
  <button><svg viewBox="0 0 26 26"><path d="M1 15l11-6 12 3v5l-10 6-13-4z" fill="url(#gb)" stroke="#6a88b8"/><path d="M2 17L22 4" stroke="#c33" stroke-width="1.3"/></svg></button>
  <button><svg viewBox="0 0 26 26"><path d="M2 9l6-2 8 2V5l4-3 4 2v17l-7 4-15-4z" fill="#5a9ce4" stroke="#1a58a8"/><path d="M5 11l4-1v6l7 2v-8l3-1v11l-14-3z" fill="url(#go)"/></svg></button>
  <button><svg viewBox="0 0 26 26"><path d="M2 9c6-5 12-5 17-2v5c-6-2-11-2-16 2z" fill="#ffe88a" stroke="#b88010"/><path d="M3 14c6-4 11-4 16-2v4c-6-2-11-1-15 2z" fill="#4a88e0"/><path d="M23 3v7m-2-5l2-3 2 3M23 15v8m-2-3l2 3 2-3" stroke="#d22" fill="none" stroke-width="1.3"/></svg></button>
  <button><svg viewBox="0 0 26 26"><path d="M2 2c4 3 6-1 9 1v10c-3 2-6-1-9 1z" fill="url(#gb)" stroke="#4a80d0"/><path d="M13 12c4 3 8-2 11 0v11c-4 2-7-1-11 1z" fill="url(#go)" stroke="#d89830"/><path d="M2 18h5" stroke="#e07010" stroke-width="2"/><path d="M6 14l6 4-6 4z" fill="#e07010"/></svg></button>
  <button><svg viewBox="0 0 26 26"><path d="M1 9l7-5 16-1v14l-8 5L1 21z" fill="none" stroke="#d33" stroke-dasharray="3 1"/><path d="M5 14c2-5 8-5 9-3l7-2 3 2v6l-6 4H5z" fill="url(#gb)" stroke="#2050c0"/></svg></button>
  <button><svg viewBox="0 0 26 26"><path d="M3 9v13l13 1 8-6V6z" fill="#4a88e8" stroke="#1a48a8"/><path d="M3 10c0-4 4-6 7-7l14 2c-5 1-8 4-8 8z" fill="url(#go)" stroke="#b86010"/></svg></button>
  <button><svg viewBox="0 0 26 26"><path d="M13 4l7-2 2 12-7 3z" fill="#e4eef8" stroke="#99a"/><path d="M20 2l4 12c-3 7-10 9-20 7l6-4c6 1 9-1 9-4z" fill="url(#go)" stroke="#d89830"/></svg></button>
  <button><svg viewBox="0 0 26 26"><path d="M2 9l8-6 15 3v18H2z" fill="#a8ccfa"/><path d="M3 8l7-6 14 3-7 8z" fill="#fff080" stroke="#c87820"/><path d="M2 11l15 4 8-9" fill="none" stroke="#e06820" stroke-width="3"/></svg></button>
  <button><svg viewBox="0 0 26 26"><path d="M9 5l10-3 5 12-12 8-8-4z" fill="none" stroke="#d86030"/><path d="M6 6l12-2v10l-12 3z" fill="#2a68d8"/></svg></button>
  <button><svg viewBox="0 0 26 26"><path d="M4 8l10-6 10 10-6 9-12 2z" fill="#bcd8ff" stroke="#2a5ac0" stroke-width="1.3"/><path d="M14 2l-4 12 14-2M10 14l8 7" stroke="#2a5ac0" fill="none"/></svg></button>
</div>
<div class="vbar three">
  <i class="vgrip"></i>
  <button><svg viewBox="0 0 26 26"><path d="M4 5h18l3 15H1z" fill="#f2f2f2" stroke="#444" stroke-width="1.2"/><path d="M6 17l1-6h6c1-5 8-4 7 0l1 5c-4 2-6-1-8 1z" fill="#fff" stroke="#445" stroke-width="1.3"/><circle cx="16" cy="11" r="1.500" fill="none" stroke="#445"/></svg></button>
  <button><svg viewBox="0 0 26 26"><path d="M3 8l18-4 3 13L6 22z" fill="#e4ecff" stroke="#3a58c8"/><circle cx="3" cy="8" r="2" fill="#c22"/><circle cx="21" cy="4" r="2" fill="#c22"/><circle cx="24" cy="17" r="2" fill="#c22"/><circle cx="6" cy="22" r="2" fill="#c22"/></svg></button>
  <button><svg viewBox="0 0 26 26"><path d="M1 24l4-7h20l-4 7z" fill="#ffd860" stroke="#c89828"/><path d="M8 5v14c0 3 11 3 11 0V5" fill="#e4ecf8" stroke="#22c" stroke-dasharray="2 1"/><ellipse cx="13.500" cy="5" rx="6" ry="3" fill="#ffd080" stroke="#d86010" stroke-width="1.3"/></svg></button>
  <button class="vtext"><span>中面(W)</span><svg viewBox="0 0 5 6"><path d="M5 0v6L0 3z"/></svg></button>
  <button><svg><use href="#sheet"/></svg></button>
  <button><svg viewBox="0 0 26 26"><use href="#sheet"/><path d="M9 5l1 12M16 5v14" stroke="#4a60c8"/></svg></button>
  <button><svg viewBox="0 0 26 26"><use href="#sheet"/><path d="M9 5l1 12M16 5v14M3 10c7 0 13 1 19 2" fill="none" stroke="#4a60c8"/></svg></button>
  <button><svg viewBox="0 0 26 26"><path d="M2 12C7 5 13 3 20 5l4 6c-3 4-5 6-7 10-4-4-10-6-15-9z" fill="#d4f0dc" stroke="#288858"/><path d="M7 8l11 10M13 5l8 10M6 15c4-6 9-9 16-6M12 18c2-4 6-7 11-7" fill="none" stroke="#288858"/></svg></button>
  <button><svg viewBox="0 0 26 26"><use href="#sheet"/><path d="M6 15l1-6c3-4 9-4 11 0l1 6-4 1v-4h-5v3z" fill="#c8dcff" stroke="#1a4898" stroke-width="1.2"/></svg></button>
  <button><svg viewBox="0 0 26 26"><path d="M2 14c8 0 11-5 13-9l9 5c-3 6-6 10-12 14z" fill="#fff" stroke="#e05010" stroke-width="1.4"/><path d="M6 13l10 8M10 10l10 7M7 18c6-1 10-6 12-11" stroke="#999" fill="none"/><path d="M4 9l5-5M19 23l5-6" stroke="#e07010" stroke-width="2.4"/></svg></button>
  <button><svg viewBox="0 0 26 26"><path d="M2 14l7-3v8l-7 3zM18 17l6-2v8l-6 1z" fill="#fdd" stroke="#d60"/><path d="M2 14V9l6-5 12-2 4 5v8M9 11l3-3h6v9M9 19l3-3V8M8 4v5" fill="none" stroke="#4a58c8" stroke-width="1.2"/></svg></button>
  <button><svg viewBox="0 0 26 26"><path d="M7 8l12-6c5 0 7 8 4 12L10 21z" fill="url(#gb)" stroke="#24518c"/><ellipse cx="8" cy="15" rx="6" ry="7" fill="#9ab8e8" stroke="#456"/><ellipse cx="8" cy="15" rx="3" ry="4" fill="#3a4a70"/></svg></button>
  <button><svg viewBox="0 0 26 26"><path d="M2 13l8-10c5 1 10 2 15 6l-7 14C13 18 8 15 2 13z" fill="#e4e4fc" stroke="#c33" stroke-width="1.2"/><path d="M7 12l4-5 9 3-4 7z" fill="#c0c8f8" stroke="#44b"/><path d="M9 10l9 4M15 8l-3 7" stroke="#44b"/></svg></button>
  <button><svg viewBox="0 0 26 26"><path d="M6 3c9-1 13 4 14 10M2 13h22" fill="none" stroke="#222" stroke-width="1.6"/><path d="M14 8l10 10" stroke="#c22" stroke-width="1.6"/><path d="M3 23c6 2 8-5 14-5" stroke="#888" fill="none" stroke-dasharray="2 1"/></svg></button>
  <button><svg viewBox="0 0 26 26"><path d="M2 13h14v13" fill="none" stroke="#222" stroke-width="1.8"/><path d="M17 13h8M16 2v10" stroke="#777" stroke-dasharray="2 1"/><path d="M9 6l13 13" stroke="#c22" stroke-width="1.6"/></svg></button>
  <button><svg viewBox="0 0 26 26"><path d="M2 23c8 1 11-2 11-10S18 3 25 3" fill="none" stroke="#222" stroke-width="1.6"/><path d="M11 4l6 6M9 16l6 6" stroke="#c22" stroke-width="1.6"/></svg></button>
  <button><svg viewBox="0 0 26 26"><path d="M2 23c10 0 15-6 14-15" fill="none" stroke="#222" stroke-width="1.6"/><path d="M15 4c2 5 2 9-1 14" fill="none" stroke="#c22" stroke-width="1.6"/><path d="M22 4v12m-2-8l2-4 2 4M20 13l2 4 2-4" fill="none" stroke="#c22"/></svg></button>
  <button><svg viewBox="0 0 26 26"><path d="M6 9l4-3h10v10l-4 4H6z" fill="#ffe468" stroke="#b88810"/><path d="M2 7l5-5h17v16l-6 6H2zM2 7h16v17M18 7l6-5" fill="none" stroke="#888"/></svg></button>
  <button><svg viewBox="0 0 26 26"><path d="M6 9l7-4 7 3v9l-7 4-7-3z" fill="#d81830"/><path d="M6 9l7 2 7-3-7-3z" fill="#f46070"/><path d="M2 6l5-5h17v18l-5 5H2zM2 6h17v18M19 6l5-5M2 24l5-5h17M7 1v18" fill="none" stroke="#333"/></svg></button>
  <button><svg viewBox="0 0 26 26"><path d="M3 12h4v7h12v-7h4v12H3z" fill="#d4d4c8" stroke="#444"/><path d="M5 3h15v8l-4 5H9l-4-5z" fill="#f8b830" stroke="#987018"/></svg></button>
  <button><svg viewBox="0 0 26 26"><path d="M2 4c2-3 7-3 9 0v11c-2 3-7 3-9 0z" fill="url(#gb)" stroke="#4a68c8"/><path d="M15 11l5-3 5 3v9l-5 3-5-3z" fill="url(#go)" stroke="#4a58c8"/><path d="M4 20h7" stroke="#e06010" stroke-width="2"/><path d="M10 16l5 4-5 4z" fill="#e06010"/></svg></button>
  <button><svg viewBox="0 0 26 26"><path d="M3 7l6-4 11 2v14l-7 5-10-3z" fill="url(#gb)" stroke="#4a80c8"/><path d="M11 9l9-4v14l-9 4z" fill="#f8a838"/><path d="M14 16h6" stroke="#e07010" stroke-width="2.4"/><path d="M19 12l6 5-7 3z" fill="#e07010"/></svg></button>
  <button><svg viewBox="0 0 26 26"><path d="M2 4l5-2 6 2v8l-5 3-6-3z" fill="url(#gb)" stroke="#2a48a8"/><path d="M8 8l6 8" fill="none" stroke="#d03010" stroke-width="1.4"/><path d="M15 13v6l-6-2z" fill="#d84018"/><path d="M14 20c5 2 7-1 7-8l4-2c1 10-3 16-10 15z" fill="url(#go)" stroke="#d07020"/></svg></button>
  <button><svg viewBox="0 0 26 26"><path d="M4 3l11 12M14 3L4 15" stroke="#333" stroke-width="2.2"/><path d="M20 2v13M18 2h5M18 15h5M2 18v5M17 18v5M3 20h13" stroke="#222" stroke-width="1.2"/><path d="M22 8l3 3M25 8l-3 3M8 22l3 3M11 22l-3 3" stroke="#c22"/></svg></button>
  <i class="vmore"><svg viewBox="0 0 5 6"><path d="M5 0v6L0 3z"/></svg></i>
</div>
</div>

<section class="viewport">
<svg class="scene" viewBox="541 122 1379 910" width="1379" height="910">
  <g stroke="#2a2412" stroke-width=".8" stroke-linejoin="round">
  <path d="M1101 481L1270 406 1408 465 1239 541z" fill="#ffbf00"/>
  <path d="M1101 481L1239 541 1230 767 1092 707z" fill="#b06800"/>
  <path d="M1239 541L1408 465 1400 692 1230 767z" fill="#d47e00"/>
  </g>
  <path d="M1095 646l44-19-1 61 49 20-45 20M1092 707l78-34" fill="none" stroke="#e6d2b8"/>
  <path d="M1169 669l13-3-11 8z" fill="#f0f0f0"/>
  <path d="M1095 600l-3 107 88 37M1088 707h9M1095 647l48 21-1 60" fill="none" stroke="#3320c0"/>
  <path d="M1095 589l-3 14h6zM1177 741l-1 7 13 1z" fill="#1a14c8"/>
  <g font-family="Liberation Sans, sans-serif" font-size="12" text-anchor="middle">
  <text x="1095" y="586" fill="#4a34b0">Z</text><text x="1194" y="757" fill="#3a28b8">X</text><text x="1186" y="671" fill="#e6d2b8">Y</text>
  <text x="613" y="915" fill="#3a50d0">Z</text><text x="651" y="981" fill="#d83a3a">X</text><text x="647" y="947" fill="#b4c0b4" font-size="10">Y</text>
  </g>
  <circle cx="1277" cy="585" r="29" fill="#d08cff"/>
  <path d="M1100 713l19-14 24-17 27-18 20-13 20-17 25-20 33-24 30-22 19-15 18-11 18-19 19-19 14-21 15-22" fill="none" stroke="#ff1e00" stroke-width="4" stroke-linejoin="round" stroke-linecap="round"/>
  <path d="M1252 601l16-11 30-21" fill="none" stroke="#ff22e8" stroke-width="4"/>
  <path d="M1398 461l5 3 2-3M1401 466l2-6" stroke="#ff1e00" stroke-width="4" stroke-linecap="round"/>
  <path d="M1454 383l5-1 4-1 2 2v5l-5 2-3-3z" fill="#ff1e00"/>
  <path d="M1278 586l6 0 19 19-2 6-5-1-17-18z" fill="#fff" stroke="#000" stroke-width="1.2"/>
  <path d="M1278 586l7 1-5 5zM1297 610l5-6" stroke="#000"/>
  <path d="M615 934l17-9 20 8-1 27-18 8-18-9zM615 934l18 8 19-9M633 942v26M632 925v24l-17 10M632 949l19 11" fill="#b8bcb8" fill-opacity=".35" stroke="#bcc0bc"/>
  <path d="M611 960l32-14" stroke="#bcd0bc" stroke-width="3"/>
  <path d="M612 958V926" stroke="#1234c0" stroke-width="3"/><path d="M612 916l-4 12h8z" fill="#1234c0"/>
  <path d="M613 960l23 9" stroke="#d03028" stroke-width="3"/><path d="M647 975l-13-1 3-7z" fill="#d03028"/>
  <circle cx="611" cy="960" r="4" fill="#ddd" stroke="#aaa"/>
</svg>
</section>
</main>

<footer class="selbar">
  <span class="combo c110"><select disabled aria-label="类型过滤器"><option></option></select><svg viewBox="0 0 17 16"><path d="M3 5h11l-5 6z"/></svg></span>
  <span class="combo c116"><select disabled aria-label="选择范围"><option>仅在工作部件内</option></select><svg viewBox="0 0 17 16"><path d="M3 5h11l-5 6z"/></svg></span>
  <button><svg viewBox="0 0 20 20"><path d="M2 6l6-3v14l-6-3zM8 8l5-2v9l-5 2z" fill="#888" stroke="#777"/><circle cx="15" cy="6" r="3" fill="none" stroke="#894" stroke-width="2"/><circle cx="16" cy="11" r="2" fill="none" stroke="#777" stroke-width="2"/></svg></button>
  <i class="sep"></i>
  <button><svg viewBox="0 0 20 20"><path d="M1 1h17v17H1z" fill="#fbe8e0" stroke="#c03038" stroke-width="1.5"/><path d="M2 9h12M8 3v12" stroke="#333"/><circle cx="8" cy="9" r="3" fill="none" stroke="#333"/><path d="M9 10l9-2-3 8-2 1z" fill="#f0b020"/></svg></button><i class="car"></i>
  <button><svg viewBox="0 0 20 20"><path d="M17 5v3c0 4-3 5-8 5" fill="none" stroke="#3a9090" stroke-width="3"/><path d="M2 13l8-5v10z" fill="#3a9090"/></svg></button>
  <button><svg viewBox="0 0 20 20"><path d="M2 8l6-5 10 3v7l-5 4-10-2z" fill="#888" stroke="#777"/></svg></button>
  <button><svg viewBox="0 0 20 20"><path d="M3 7c0-5 8-5 8 0M1 2v5h5M13 7v12M7 13h12" fill="none" stroke="#777" stroke-width="1.5"/><circle cx="13" cy="13" r="3" fill="none" stroke="#777"/></svg></button>
  <button><svg viewBox="0 0 20 20"><path d="M3 7c0-5 8-5 8 0M1 2v5h5M14 7v9M9 12h10M7 12l-5 4 5 3" fill="none" stroke="#777" stroke-width="1.5"/></svg></button>
  <button><svg viewBox="0 0 20 20"><path d="M2 3h9l5 4v10h-4v-7L3 7z" fill="#888" stroke="#888"/></svg></button>
  <i class="sep"></i>
  <button><svg viewBox="0 0 20 20"><path d="M3 3h14v14H3z" fill="none" stroke="#555" stroke-dasharray="3 2"/></svg></button><i class="car wide"></i>
  <i class="sep"></i>
  <button><svg viewBox="0 0 20 20"><path d="M1 4v12M12 3v14M5 10h14M9 6l3-3 3 3M9 14l3 3 3-3M16 7l3 3-3 3M8 7l-3 3 3 3" fill="none" stroke="#777" stroke-width="1.4"/></svg></button>
  <button><svg viewBox="0 0 20 20"><path d="M9 1v14M2 8h14M6 4h6v8H6z" fill="none" stroke="#777" stroke-width="1.3"/><circle cx="9" cy="8" r="2.500" fill="#e0c040"/><path d="M11 14h7v4h-6z" fill="#68a4a4"/></svg></button>
  <button><svg viewBox="0 0 20 20"><path d="M2 18L16 4" stroke="#777" stroke-width="1.3"/><circle cx="16" cy="4" r="2" fill="#666"/></svg></button>
  <button><svg viewBox="0 0 20 20"><path d="M3 17L17 3" stroke="#777" stroke-width="1.3"/><circle cx="10" cy="10" r="2" fill="#666"/></svg></button>
  <button><svg viewBox="0 0 20 20"><path d="M3 3c8 0 6 3 7 7s1 7 7 7" fill="none" stroke="#777" stroke-width="1.4"/><circle cx="9" cy="7" r="2" fill="#c66"/></svg></button>
  <button><svg viewBox="0 0 20 20"><path d="M10 1v17M2 13c3-9 13-9 16 0" fill="none" stroke="#777" stroke-width="1.4"/><circle cx="10" cy="7" r="2" fill="#c55"/></svg></button>
  <button><svg viewBox="0 0 20 20"><circle cx="10" cy="10" r="7" fill="none" stroke="#777" stroke-width="1.2"/><circle cx="10" cy="10" r="1.500" fill="#666"/></svg></button>
  <button><svg viewBox="0 0 20 20"><circle cx="10" cy="10" r="7" fill="none" stroke="#777" stroke-width="1.3"/><g fill="#b87838"><circle cx="10" cy="3" r="2"/><circle cx="10" cy="17" r="2"/><circle cx="3" cy="10" r="2"/><circle cx="17" cy="10" r="2"/></g></svg></button>
  <button><svg viewBox="0 0 20 20"><path d="M10 4v13M4 10h13" stroke="#777" stroke-width="1.3"/></svg></button>
  <button><svg viewBox="0 0 20 20"><path d="M4 16L17 3" stroke="#777" stroke-width="1.3"/><circle cx="4" cy="16" r="2" fill="#c99"/></svg></button>
  <button><svg viewBox="0 0 20 20"><path d="M3 6l7-4 8 2c-3 4-4 8-3 10l-5 4-7-3z" fill="#8890b0" stroke="#778"/><circle cx="11" cy="6" r="2" fill="#c55"/></svg></button>
  <i class="sep"></i>
  <button><svg viewBox="0 0 20 20"><path d="M3 3l12 3v12L3 14zM7 4v11M11 5v12M3 7l12 3M3 11l12 3" fill="none" stroke="#666"/><circle cx="12" cy="7" r="1.500" fill="#c55"/></svg></button>
  <i class="sep"></i>
  <button><svg viewBox="0 0 20 20"><path d="M2 5l7-3 9 2v11l-7 4-9-3z" fill="#fff" stroke="#1a4cb0"/><path d="M2 5l9 3v11l-9-3z" fill="#5aa2ff"/><path d="M11 8l7-4v11l-7 4z" fill="#1e66e4"/><path d="M9 0v8" stroke="#d22"/></svg></button>
  <i class="car end"></i>
</footer>
</div>

<section class="pen" aria-label="电子教鞭">
  <header><span>电子教鞭</span><button aria-label="关闭"><svg viewBox="0 0 9 9"><path d="M1 1h7v7H1z" fill="none" stroke="#555"/><path d="M3 3l3 3M6 3L3 6" stroke="#444" stroke-width="1.2"/></svg></button></header>
  <div class="penbody">
    <div class="tools">
      <button><svg viewBox="0 0 18 18"><path d="M2 11l7-8h6l-1 5-6 7H2zM2 11h6l7-8M8 11v4" fill="#fff" stroke="#222"/></svg></button>
      <button><svg viewBox="0 0 18 18"><path d="M10 6l-7 8 1 2 8-8" fill="#fff" stroke="#222"/><path d="M9 4l5 5M11 6l3-4 3 2-3 4z" fill="#222" stroke="#222" stroke-width="1.5"/><path d="M1 17h7l-3-3z" fill="#c22"/></svg></button>
      <button><svg viewBox="0 0 18 18"><path d="M1 15C0 6 3 3 9 3l-3 5-2 0z" fill="#e22"/><path d="M6 8l5-5 6 6-6 6z" fill="#c88" stroke="#222"/><path d="M8 2l6 7" stroke="#222" stroke-width="1.5"/></svg></button>
      <button class="on"><svg viewBox="0 0 18 18"><path d="M0 3h6" stroke="#c22"/><path d="M5 3l4 1 8 9-1 3-3-1-8-8zM14 15l3-3" fill="#fff" stroke="#111"/><path d="M5 3l3 1-3 3z"/></svg></button>
      <button><svg viewBox="0 0 18 18"><path d="M3 3l12 12" stroke="#c33"/></svg></button>
      <button><svg viewBox="0 0 18 18"><path d="M15 15L3 3M3 9V3h6" fill="none" stroke="#c33" stroke-width="1.2"/></svg></button>
      <button><svg viewBox="0 0 18 18"><path d="M1 3h16v12H1z" fill="none" stroke="#e22"/></svg></button>
      <button><svg viewBox="0 0 18 18"><ellipse cx="9" cy="9" rx="8" ry="6" fill="none" stroke="#c33"/></svg></button>
      <button><svg viewBox="0 0 18 18"><path d="M1 3h16v12H1z" fill="#ff1c00"/></svg></button>
      <button><svg viewBox="0 0 18 18"><ellipse cx="9" cy="9" rx="9" ry="6" fill="#ff1c00"/></svg></button>
      <button><svg viewBox="0 0 18 18"><path d="M5 15V7l3-3h2l3 3v8M6 11h6" fill="none" stroke="#e02020" stroke-width="2.6"/></svg></button>
      <button><svg viewBox="0 0 18 18"><path d="M2 14V7l2-2 2 2v7M2 10h4M10 14V6l3-3 3 3v8M10 10h6" fill="none" stroke="#999" stroke-width="1.5"/></svg></button>
      <button><svg viewBox="0 0 18 18"><path d="M1 2h16v8H1z"/><path d="M1 10h16v5H1z" fill="#fff"/></svg></button>
      <button><svg viewBox="0 0 18 18"><path d="M1 2h16v12H1z" fill="#28d8e8" stroke="#222"/><path d="M6 17h7M9 14v3" stroke="#111" stroke-width="2"/><path d="M4 5h8M12 4l-6 7M6 6l7 6" stroke="#b33" stroke-width="1.5"/></svg></button>
      <button><svg viewBox="0 0 18 18"><circle cx="7" cy="7" r="5" fill="#28e8f8" stroke="#156"/><path d="M11 11l5 5" stroke="#111" stroke-width="3"/></svg></button>
      <button><svg viewBox="0 0 18 18"><path d="M2 3h14v13H2z" fill="#664" stroke="#111" stroke-width="1.5"/><path d="M5 3h8v6H5z" fill="#fff"/><path d="M5 11h8v5H5z" fill="#111"/><path d="M10 12h2v3h-2z" fill="#fff"/></svg></button>
      <button><svg viewBox="0 0 18 18"><path d="M2 6h5l1 2h6v8H2z" fill="#ffffa0" stroke="#111"/><path d="M2 16l3-5h12l-3 5z" fill="#886" stroke="#111"/><path d="M10 4c2-3 4-2 6 1V2" fill="none" stroke="#111"/></svg></button>
      <button><svg viewBox="0 0 18 18"><path d="M9 3l5 6-5 6-5-6z" fill="none" stroke="#e55"/></svg></button>
    </div>
    <div class="pensel">
      <span class="combo3"><select aria-label="线宽"><option>4</option></select><b><svg viewBox="0 0 8 5"><path d="M0 0h8L4 5z"/></svg></b></span>
      <button class="combo3" aria-label="颜色"><em></em><b><svg viewBox="0 0 8 5"><path d="M0 0h8L4 5z"/></svg></b></button>
    </div>
    <a href="#">红烛软件</a>
  </div>
</section>

<section class="dialog" aria-label="块">
  <header><span>块</span>
    <button aria-label="重置"><svg viewBox="0 0 17 17"><path d="M9 4a5 5 0 1 1-5 6" fill="none" stroke="#fff" stroke-width="2.6"/></svg></button>
    <button aria-label="选项"><svg viewBox="0 0 17 17"><circle cx="8.500" cy="8.500" r="4" fill="none" stroke="#fff" stroke-width="2.4"/><path d="M8.500 1v3M8.500 13v3M1 8.500h3M13 8.500h3M3 3l2 2M12 12l2 2M3 14l2-2M12 5l2-2" stroke="#fff" stroke-width="2"/></svg></button>
    <button class="close" aria-label="关闭"><svg viewBox="0 0 17 17"><path d="M4 3l9 11M13 3L4 14" stroke="#fff" stroke-width="2.2"/></svg></button>
  </header>
  <div class="dbody">
    <h3>类型<svg viewBox="0 0 12 12"><path d="M2 10l4-8 4 8"/></svg></h3>
    <div class="grp h41"><span class="field grow"><svg class="fi" viewBox="0 0 22 20"><path d="M4 6l4-3h10v11l-3 3H4z" fill="#c8c4d4" stroke="#b0acc0"/><circle cx="4" cy="17" r="2" fill="#dba0a0"/><circle cx="18" cy="15" r="2" fill="#dba0a0"/></svg><select disabled aria-label="类型"><option>两点和高度</option></select><svg class="dd" viewBox="0 0 17 22"><path d="M3 8h11l-5 6z"/></svg></span></div>
    <h3>原点<svg viewBox="0 0 12 12"><path d="M2 10l4-8 4 8"/></svg></h3>
    <div class="grp h47"><svg class="tick" viewBox="0 0 12 12"><path d="M1 6l4 4 6-9"/></svg><label>指定点</label><span class="fill"></span>
      <button class="pt" disabled aria-label="点对话框"><svg viewBox="0 0 21 21"><path d="M12 3v8M8 7h8" stroke="#888" stroke-width="1.2"/><path d="M3 11c0 3 2 4 5 3" fill="none" stroke="#aaa" stroke-width="2"/><path d="M6 11l4 3-4 3z" fill="#aaa"/><path d="M11 17h2M15 17h2" stroke="#888" stroke-width="2"/></svg></button>
      <button class="pk" disabled aria-label="捕捉点"><svg viewBox="0 0 30 28"><path d="M7 9h11v7" fill="none" stroke="#999" stroke-width="1.4"/><path d="M13 17h10l-5 6z" fill="#aaa"/></svg><svg class="ar" viewBox="0 0 16 28"><path d="M4 13h8l-4 4z"/></svg></button></div>
    <h3>从原点出发的点<span class="lb"> XC, YC</span><svg viewBox="0 0 12 12"><path d="M2 10l4-8 4 8"/></svg></h3>
    <div class="grp h47"><svg class="tick" viewBox="0 0 12 12"><path d="M1 6l4 4 6-9"/></svg><label>指定点</label><span class="fill"></span>
      <button class="pt" disabled aria-label="点对话框"><svg viewBox="0 0 21 21"><path d="M12 3v8M8 7h8" stroke="#888" stroke-width="1.2"/><path d="M3 11c0 3 2 4 5 3" fill="none" stroke="#aaa" stroke-width="2"/><path d="M6 11l4 3-4 3z" fill="#aaa"/><path d="M11 17h2M15 17h2" stroke="#888" stroke-width="2"/></svg></button>
      <button class="pk" disabled aria-label="捕捉点"><svg viewBox="0 0 30 28"><path d="M15 2v8M15 18v8M3 14h9M18 14h9" stroke="#999" stroke-width="1.2"/><circle cx="15" cy="14" r="2" fill="#988"/></svg><svg class="ar" viewBox="0 0 16 28"><path d="M4 13h8l-4 4z"/></svg></button></div>
    <h3>尺寸<svg viewBox="0 0 12 12"><path d="M2 10l4-8 4 8"/></svg></h3>
    <div class="grp h35"><label for="hz">高度<span class="la"> (ZC)</span></label><span class="fill"></span><span class="field half low"><input id="hz" value="40" disabled><span class="unit">mm</span><svg class="dd" viewBox="0 0 17 18"><path d="M6 3h5v5h4l-6 7-7-7h4z"/></svg></span></div>
    <h3>布尔<svg viewBox="0 0 12 12"><path d="M2 10l4-8 4 8"/></svg></h3>
    <div class="grp h41"><label for="bl">布尔</label><span class="fill"></span><span class="field half"><svg class="fi" viewBox="0 0 22 20"><path d="M3 3l4 2 2-3 2 5c6 0 8 3 7 7-3 4-8 3-9 0l-1-5-5-1 3-2z" fill="#999"/></svg><select id="bl" disabled><option>无</option></select><svg class="dd" viewBox="0 0 17 22"><path d="M3 8h11l-5 6z"/></svg></span></div>
    <h3>设置<svg viewBox="0 0 12 12"><path d="M2 2l4 8 4-8"/></svg></h3>
    <h3>预览<svg viewBox="0 0 12 12"><path d="M2 10l4-8 4 8"/></svg></h3>
    <div class="grp h47"><span class="fill"></span><span class="blk">撤消结果</span><button class="undo" aria-label="撤消结果"><svg viewBox="0 0 28 28"><path d="M8 16C9 6 25 8 22 16l-3 5" fill="none" stroke="#223060" stroke-width="2.4"/><path d="M4 11l9 6-9 4z" fill="#101c50"/></svg></button></div>
    <div class="acts"><button>&lt; 确定 &gt;</button><button class="ok">应用</button><button>取消</button></div>
  </div>
</section>

<section class="logo">
  <svg viewBox="0 0 80 60" width="80" height="60"><path d="M40 0l8 7-8 8-8-8z" fill="#2e3192"/><path d="M40 2l1 4 5 1-5 2-1 4-1-4-5-2 5-1z" fill="#fff"/>
  <g fill="none" stroke="#2e3192" stroke-width="5"><path d="M28 28l-7-6L4 39l18 18h13"/><path d="M47 30l11-8 18 17-18 18H40"/><path d="M40 21L23 39l17 18 17-18z"/><path d="M32 32l8 9 8-9" stroke-width="4"/></g></svg>
  <strong>点冠教育</strong><span>DIANGUAN EDUCATION</span>
</section>
</body>
</html>
```
FILE: styles.css
```css
* { box-sizing: border-box; }
body {
  margin: 0;
  background: #000;
  color: #111;
  font-family: "Noto Sans CJK SC", sans-serif;
  font-size: 12px;
  line-height: 16px;
  position: relative;
  overflow: hidden;
}
button, select, input { font: inherit; color: inherit; margin: 0; padding: 0; border: 0; background: none; border-radius: 0; }
a { color: inherit; text-decoration: none; }
svg { display: block; flex: none; }
.defs { position: absolute; }
.la { font-family: "Liberation Mono", monospace; font-size: 10px; white-space: pre; }
.i16 { width: 16px; height: 16px; }
.i18 { width: 18px; height: 18px; }

.app { height: 100vh; padding: 20px 0; display: flex; flex-direction: column; }

.titlebar {
  height: 22px; flex: none; display: flex; align-items: center; padding: 0 2px 0 3px;
  background: linear-gradient(#77777a 0, #58585b 8px, #1c1c1e 9px, #1c1c1e 20px, #000 100%);
  color: #e8e8e8;
}
.apptitle { margin-left: 5px; font-family: "Open Sans", "Noto Sans CJK SC", sans-serif; font-size: 13px; text-spacing-trim: space-all; }
.brand { margin-left: auto; margin-right: 27px; font-family: "Open Sans", sans-serif; font-size: 13px; font-weight: 800; color: #fff; }
.winbtns { display: flex; gap: 4px; }
.winbtns button { width: 18px; height: 19px; border: 1px solid #777; border-radius: 0 0 4px 4px; background: linear-gradient(#666, #222); }
.winbtns svg { width: 16px; height: 17px; }
.winbtns button.close { background: linear-gradient(#f09070, #d84018); border-color: #e8a080; }

.menubar { height: 24px; flex: none; display: flex; align-items: center; gap: 13px; padding: 0 4px 0 4px; background: #e3e3e3; border-bottom: 1px solid #c4c4c4; color: #000; white-space: nowrap; }
.menubar .grip { height: 16px; margin-right: -14px; }
.menubar .i18 { margin-right: -10px; }
.docbtns { margin-left: auto; display: flex; gap: 2px; }
.docbtns button { width: 17px; height: 17px; border: 1px solid #888; border-radius: 4px; background: #f2f2f2; }
.docbtns svg { width: 15px; height: 15px; }

.grip { width: 5px; height: 24px; flex: none; border-left: 3px dotted #b0b0b0; }
.sep { width: 6px; height: 30px; flex: none; border-left: 1px solid #aaa; box-shadow: inset 1px 0 #f6f6f6; margin-left: 2px; margin-right: -2px; }
.car { width: 12px; height: 4px; flex: none; background: #222; clip-path: polygon(3px 0, 11px 0, 7px 4px); }
.car.low { margin-top: 18px; }

.toolbar { height: 34px; flex: none; display: flex; align-items: center; padding-left: 4px; background: linear-gradient(#e2e2e2, #cdcdcd); border-top: 1px solid #f4f4f4; border-bottom: 1px solid #b4b4b4; overflow: hidden; }
.toolbar button { width: 31px; height: 30px; flex: none; display: flex; align-items: center; justify-content: center; }
.toolbar button svg { width: 26px; height: 26px; }
.toolbar button svg svg { width: 16px; height: 16px; }
.toolbar button.wide { width: auto; gap: 4px; padding: 0 3px 0 2px; color: #000; }
.startgroup { width: 69px; display: flex; align-items: flex-start; gap: 4px; }
.startgroup svg { width: 26px; height: 26px; }
.gap { width: 10px; height: 30px; border-left: 1px solid #bbb; flex: none; border-right: 1px solid #fff; margin-right: 2px; }

.cuebar { height: 22px; flex: none; display: flex; align-items: center; gap: 2px; background: #dadada; border-top: 1px solid #eee; border-bottom: 2px solid #9a9a9a; padding-right: 2px; }
.cuebar span { height: 20px; border-right: 1px solid #fff; }
.cuebar .cue { width: 911px; }
.cuebar .status { flex: 1; }
.cuebar .c1 { width: 17px; }
.cuebar .c2 { width: 34px; }
.cuebar svg { width: 18px; height: 18px; }

.main { flex: 1; min-height: 0; display: flex; background: #ccc; overflow: hidden; }
.rbar { width: 33px; flex: none; padding: 197px 0 0 6px; display: flex; flex-direction: column; gap: 2px; background: #ababab; border-right: 1px solid #777; }
.rbar button { width: 27px; height: 40px; flex: none; display: flex; align-items: center; justify-content: center; background: #d4d4d4; border: 1px solid #777; border-right: 0; border-radius: 4px 0 0 4px; box-shadow: inset 1px 1px #f4f4f4; }
.rbar .spaced { margin-top: 12px; }
.rbar svg { width: 22px; height: 22px; }

.navpanel { width: 405px; flex: none; display: flex; flex-direction: column; background: #ebebeb; padding: 0 8px 0 9px; border-right: 2px solid #777; }
.navpanel h2 { margin: 0; height: 35px; padding: 10px 0 0 29px; font-size: 13px; line-height: 18px; color: #000; }
.tree { flex: 1; min-height: 0; overflow: hidden; border: 1px solid #777; background: #fff; }
table { width: 100%; border-collapse: collapse; table-layout: fixed; }
.k1 { width: 200px; }
.k2 { width: 100px; }
th { height: 17px; padding: 0 0 0 5px; text-align: left; font-weight: normal; line-height: 16px; background: linear-gradient(#fafafa, #e0e0e0); border-right: 1px solid #999; border-bottom: 1px solid #999; }
th:last-child { border-right: 0; }
.sorted { padding-left: 52px; }
.sorted svg { width: 6px; height: 5px; }
td { height: 20px; padding: 0; border-right: 1px solid #ddd; border-bottom: 1px solid #e4e4e4; white-space: nowrap; color: #222; }
td:last-child { border-right: 0; }
tbody tr:nth-child(even) { background: #f6f6f6; }
.t1 { padding-left: 38px; }
.t2 { padding-left: 54px; }
td svg { display: inline-block; vertical-align: -4px; margin-right: 3px; }
.hscroll { height: 18px; flex: none; display: flex; align-items: flex-start; gap: 5px; padding-top: 3px; }
.hscroll i { width: 153px; height: 4px; border-bottom: 1px solid #aaa; }
.hscroll b { flex: 1; height: 7px; background: #ddd; border: 1px solid #fff; border-bottom-color: #999; }

.vbars { display: flex; flex: none; width: 103px; align-items: flex-start; padding-left: 1px; background: #cecece; }
.vbar { width: 34px; flex: none; display: flex; flex-direction: column; align-items: center; background: #dcdcdc; border-left: 1px solid #f8f8f8; border-right: 1px solid #c4c4c4; border-bottom: 1px solid #aaa; }
.vbar.two { padding: 2px 0 14px; }
.vbar button { width: 31px; height: 31px; flex: none; display: flex; align-items: center; justify-content: center; }
.vbar button svg { width: 24px; height: 24px; }
.vgrip { width: 22px; height: 9px; flex: none; border-top: 3px dotted #b4b4b4; margin-top: 4px; margin-bottom: -5px; }
.three .vgrip { margin-top: 3px; margin-bottom: -6px; }
.vsep { width: 30px; height: 6px; flex: none; border-top: 1px solid #bbb; box-shadow: inset 0 1px #f6f6f6; margin-top: 2px; margin-bottom: -2px; }
.vbar .vtext { height: 58px; flex-direction: column; gap: 4px; color: #000; }
.vtext span { writing-mode: vertical-rl; text-orientation: sideways; }
.vbar .vtext svg, .vmore svg { width: 5px; height: 6px; }
.vmore { width: 24px; height: 12px; padding-top: 2px; }

.viewport { flex: 1; min-width: 0; position: relative; overflow: hidden; background: linear-gradient(#b5b6b8, #e7e9eb 70%, #e7e9eb); }
.scene { position: absolute; left: 0; top: 0; }

.selbar { height: 28px; flex: none; display: flex; align-items: center; padding: 0 4px 2px 5px; background: linear-gradient(#c6c6c6, #dcdcdc 60%, #cfcfcf); border-top: 1px solid #888; }
.selbar button { width: 23px; height: 22px; flex: none; display: flex; align-items: center; justify-content: center; }
.selbar button svg { width: 18px; height: 18px; }
.selbar .sep { width: 5px; height: 24px; }
.selbar .car { width: 8px; clip-path: polygon(0 0, 7px 0, 4px 4px); }
.selbar .car.wide { width: 12px; clip-path: polygon(3px 0, 11px 0, 7px 4px); }
.selbar .end { margin-left: auto; margin-top: 12px; }
.combo { display: flex; height: 17px; margin-right: 8px; border: 1px solid #aaa; border-radius: 3px; background: #d2d2d2; box-shadow: 1px 1px #fff; overflow: hidden; }
.combo select { flex: 1; min-width: 0; appearance: none; padding-left: 2px; color: #a0a0a0; line-height: 15px; text-shadow: 1px 1px #fff; opacity: 1; }
.combo svg { width: 17px; height: 15px; background: #eee; fill: #888; }
.c110 { width: 110px; }
.c116 { width: 116px; margin-right: 4px; }

.pen { position: absolute; left: 0; top: 75px; width: 97px; padding: 0 6px 4px 1px; background: linear-gradient(#bcd4e8, #e4f0f8 20px, #d4e4f0); border: 1px solid #6a7480; border-left: 0; }
.pen header { height: 25px; display: flex; align-items: center; justify-content: space-between; padding-left: 2px; }
.pen header button { width: 19px; height: 19px; border: 1px solid #5a6c88; border-radius: 2px; background: #dce8f4; display: flex; align-items: center; justify-content: center; }
.pen header svg { width: 9px; height: 9px; }
.penbody { height: 221px; border: 1px solid #555; background: #f0f0f0; padding: 3px 2px 0 0; display: flex; flex-direction: column; align-items: center; }
.tools { display: grid; grid-template-columns: repeat(3, 28px); grid-auto-rows: 26px; }
.tools button { display: flex; align-items: center; justify-content: center; }
.tools .on { background: #fff; border: 1px solid #999; border-right-color: #eee; border-bottom-color: #eee; }
.tools svg { width: 17px; height: 17px; }
.pensel { display: flex; gap: 4px; margin-top: 9px; }
.combo3 { width: 38px; height: 22px; display: flex; border: 1px solid; border-color: #777 #eee #eee #777; background: #fff; }
.combo3 select { flex: 1; min-width: 0; appearance: none; padding-left: 4px; font-size: 13px; }
.combo3 b { width: 17px; display: flex; align-items: center; justify-content: center; background: #eee; border: 1px solid; border-color: #fff #777 #777 #fff; }
.combo3 svg { width: 8px; height: 5px; }
.combo3 em { flex: 1; margin: 1px; background: #ff1c00; border: 1px solid #111; outline: 1px solid #fff; }
.pen a { margin-top: 6px; color: #d02828; }

.dialog { position: absolute; left: 585px; top: 222px; width: 290px; background: #e6e8ea; border: 1px solid #111; border-bottom: 8px solid #151515; border-radius: 7px 7px 5px 5px; overflow: hidden; }
.dialog header { height: 24px; display: flex; align-items: center; gap: 4px; padding: 0 3px 0 8px; color: #fff; background: linear-gradient(#6a6a6c, #444 8px, #1a1a1c 9px, #1a1a1c); }
.dialog header span { flex: 1; }
.dialog header button { width: 17px; height: 17px; border: 1px solid #666; border-radius: 3px; background: linear-gradient(#555, #333); }
.dialog header button.close { background: linear-gradient(#f09070, #d84018); border-color: #e8a080; }
.dialog header svg { width: 15px; height: 15px; }
.dbody { padding: 3px 6px 0; }
.dialog h3 { margin: 0; height: 23px; display: flex; align-items: center; padding-left: 5px; font-size: 13px; color: #222; background: linear-gradient(#fafafa, #f4f4f4 45%, #dcdddf 55%, #e2e3e5); border-bottom: 1px solid #808080; white-space: pre; }
.dialog h3 svg { width: 23px; height: 20px; margin-left: auto; padding: 4px 5px; border-left: 1px solid #bbb; fill: none; stroke: #555; stroke-width: 2; }
.lb { font-family: "Liberation Mono", monospace; font-size: 12px; }
.grp { display: flex; align-items: center; padding: 0 8px 4px 7px; background: #d3d3d3; border-left: 1px solid #aaa; border-right: 1px solid #aaa; color: #999; }
.h35 { height: 35px; }
.h41 { height: 41px; }
.h47 { height: 47px; }
.fill { flex: 1; }
.tick { width: 12px; height: 12px; margin: 0 6px 0 2px; fill: none; stroke: #5a9068; stroke-width: 3; }
.field { display: flex; height: 25px; border: 1px solid #aaa; border-radius: 4px; background: #d2d2d2; box-shadow: 1px 1px #f4f4f4; overflow: hidden; align-items: center; }
.field.grow { flex: 1; }
.field.half { width: 107px; }
.field.low { height: 19px; }
.fi { width: 22px; height: 21px; background: #e4e4e4; margin-left: 1px; }
.field select { flex: 1; min-width: 0; appearance: none; color: #888; opacity: 1; }
.field input { flex: 1; min-width: 0; padding-left: 3px; color: #777; line-height: 16px; }
.unit { margin-right: 18px; font-family: "Liberation Mono", monospace; font-size: 10px; }
.dd { width: 17px; height: 100%; background: #eee; fill: #999; border-left: 1px solid #bbb; }
.pt { width: 23px; height: 23px; border: 1px solid #aaa; border-radius: 4px; background: #e8e8e8; margin-right: 3px; }
.pt svg { width: 21px; height: 21px; }
.pk { width: 48px; height: 31px; border: 1px solid #aaa; border-radius: 4px; background: linear-gradient(#eee, #d8d8d8); box-shadow: 0 1px #fff; display: flex; }
.pk svg { width: 30px; height: 29px; }
.pk .ar { width: 16px; border-left: 1px solid #aaa; fill: #999; }
.blk { color: #000; margin-right: 4px; }
.undo { width: 30px; height: 30px; border: 1px solid #666; border-radius: 3px; background: #e0e4ec; outline: 1px dotted #333; outline-offset: -3px; }
.acts { margin-top: 3px; padding: 5px 10px 6px 0; height: 31px; border-top: 1px solid #999; display: flex; justify-content: flex-end; gap: 7px; color: #000; }
.acts button { width: 64px; height: 18px; border: 1px solid #666; border-radius: 3px; background: linear-gradient(#fff, #e8e8ea 50%, #d0d2d6 52%, #e8e8ea); line-height: 14px; }
.acts .ok { background: linear-gradient(#c8f0a8, #88d868 50%, #70c850 52%, #a8e888); border-color: #3a6a30; }

.logo { position: absolute; left: 265px; bottom: 45px; width: 225px; height: 138px; padding: 19px 4px 0 0; display: flex; flex-direction: column; align-items: center; background: #f8f8f8; color: #2a2420; }
.logo strong { font-size: 27px; font-weight: 900; line-height: 27px; }
.logo span { font-family: "Open Sans", sans-serif; font-size: 9px; font-weight: 700; line-height: 10px; margin-top: 2px; }
```
